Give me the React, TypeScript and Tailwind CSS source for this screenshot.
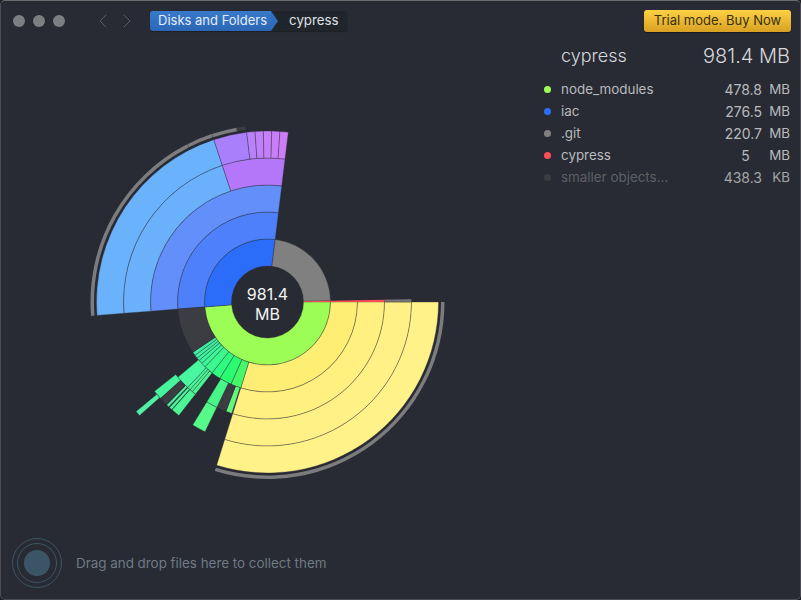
import { ChevronLeft, ChevronRight } from "lucide-react"

const CX = 267.5
const CY = 302
const R = [36, 63, 90, 117, 144, 171]

const pt = (r: number, deg: number) => {
  const a = (deg * Math.PI) / 180
  return `${(CX + r * Math.cos(a)).toFixed(2)} ${(CY + r * Math.sin(a)).toFixed(2)}`
}

const arc = (r0: number, r1: number, a0: number, a1: number) => {
  const large = a1 - a0 > 180 ? 1 : 0
  return `M${pt(r0, a0)} A${r0} ${r0} 0 ${large} 1 ${pt(r0, a1)} L${pt(r1, a1)} A${r1} ${r1} 0 ${large} 0 ${pt(r1, a0)} Z`
}

// ring index, start angle, end angle, colour (degrees clockwise from east)
const slices: [number, number, number, string][] = [
  [0, 0, 175.5, "#9bfd55"],
  [0, 175.5, 277, "#2b6cf9"],
  [0, 277, 358.8, "#808080"],

  [1, 0, 107.3, "#ffee74"],
  [2, 0, 107.3, "#fff080"],
  [3, 0, 107.3, "#fff185"],
  [4, 0, 107.3, "#fff288"],
  [3, 358.8, 360, "#777779"],

  [1, 175.5, 277, "#4e80fb"],
  [2, 175.5, 277, "#628ffa"],
  [3, 175.5, 251.7, "#6ab0fb"],
  [4, 175.5, 251.7, "#6bb2fc"],
  [3, 251.7, 277, "#b477fa"],
  [4, 251.7, 263, "#a97ffb"],
  [4, 263, 265.8, "#b982fa"],
  [4, 265.8, 268.6, "#bf80fa"],
  [4, 268.6, 271.4, "#c47ff9"],
  [4, 271.4, 274.2, "#c97ef9"],
  [4, 274.2, 277, "#ce7df8"],

  // node_modules children
  [1, 107.3, 114, "#47f76a"],
  [1, 114, 122, "#2bfb70"],
  [1, 122, 128, "#2ffb80"],
  [1, 128, 134, "#3bf98f"],
  [1, 134, 137, "#3ff796"],
  [1, 137, 139.5, "#3ff59a"],
  [1, 139.5, 141.5, "#3ff39e"],
  [1, 141.5, 143.7, "#40f1a0"],
  [1, 143.7, 146, "#40efa2"],
  [1, 146, 175.5, "#3c3d42"],

  [2, 107.8, 110.8, "#62f97c"],
  [2, 110.8, 115.7, "#3c3d42"],
  [2, 115.7, 121.3, "#47f686"],
  [2, 128, 130, "#4cf692"],
  [2, 130, 131.5, "#4cf696"],
  [2, 131.5, 133, "#4af69a"],
  [2, 133, 140, "#48f7a0"],
  [3, 115.7, 121.3, "#55fa88"],
  [3, 128, 131.5, "#4cf696"],
  [3, 131.7, 132.9, "#4cf49c"],
  [3, 133.3, 134.4, "#4cf49e"],
  [3, 134.6, 137.8, "#3c3d42"],
  [3, 138, 141.7, "#45f49c"],
  [4, 138.4, 140.2, "#4ff0a5"],
]

const outer: [number, number, string][] = [
  [0, 107.3, "#7c7c7e"],
  [175.5, 243, "#7c7c7e"],
  [243.1, 251.6, "#7c7c7e"],
  [251.7, 259.9, "#7c7c7e"],
  [259.9, 262.8, "#3c3d42"],
]

const legend = [
  { name: "node_modules", num: "478.8", unit: "MB", dot: "bg-[#9bfd55]" },
  { name: "iac", num: "276.5", unit: "MB", dot: "bg-[#2b6cf9]" },
  { name: ".git", num: "220.7", unit: "MB", dot: "bg-[#808080]" },
  { name: "cypress", num: "5", unit: "MB", dot: "bg-[#ff4d55]" },
  { name: "smaller objects...", num: "438.3", unit: "KB", dot: "bg-[#3c3d42]", dim: true },
]

const Sunburst = () => (
  <div className="relative w-[540px] h-[490px]">
    <svg width="540" height="490" viewBox="1 40 540 490">
      {slices.map(([ring, a0, a1, color], i) => (
        <path
          key={i}
          d={arc(R[ring], R[ring + 1], a0, a1)}
          fill={color}
          stroke="#2a2c34"
          strokeOpacity="0.7"
          strokeWidth="0.5"
        />
      ))}
      <path d={arc(36, 117, 358.9, 360)} fill="#ff4d55" />
      {outer.map(([a0, a1, color], i) => (
        <path key={i} d={arc(173.5, 177, a0, a1)} fill={color} />
      ))}
    </svg>
    <div className="absolute left-[226px] top-[244px] w-[81px] text-center text-[16px] leading-[20px] text-[#f2f3f4]">
      981.4
      <br />
      MB
    </div>
  </div>
)

export default function App() {
  return (
    <div className="w-[801px] h-[600px] bg-[#1d1e22] font-['Inter',sans-serif]">
      <div className="w-full h-full flex flex-col bg-[#282b33] border border-[#4b4d52] border-t-[#6a6b6e] rounded-[5px] overflow-hidden">
        {/* Title bar */}
        <div className="h-[39px] shrink-0 flex items-center pl-[12px] pr-[9px]">
          <div className="flex gap-[8px]">
            <span className="w-[12px] h-[12px] rounded-full bg-[#7d7e82]" />
            <span className="w-[12px] h-[12px] rounded-full bg-[#7d7e82]" />
            <span className="w-[12px] h-[12px] rounded-full bg-[#7d7e82]" />
          </div>
          <div className="flex ml-[26px] gap-0 text-[#555a62]">
            <ChevronLeft size={24} strokeWidth={1} />
            <ChevronRight size={24} strokeWidth={1} />
          </div>
          <div className="flex items-center h-[20px] ml-[11px] text-[13px] rounded-[3px] bg-[#20242b] shadow-[0_1px_1px_rgba(0,0,0,0.3)]">
            <div className="relative h-full flex items-center pl-[8px] pr-[4px] rounded-l-[3px] bg-gradient-to-b from-[#3a7acb] to-[#2a66b4] text-[#e4edf8]">
              Disks and Folders
              <span className="absolute left-full top-0 border-y-[10px] border-y-transparent border-l-[7px] border-l-[#2f6ebf]" />
            </div>
            <div className="pl-[18px] pr-[8px] text-[13.3px] text-[#dfe1e4]">cypress</div>
          </div>
          <button className="ml-auto w-[147px] h-[22px] rounded-[3px] bg-gradient-to-b from-[#fdd243] to-[#d8a022] text-[13px] text-[#37300f] shadow-[0_1px_1px_rgba(0,0,0,0.4)]">
            Trial mode. Buy Now
          </button>
        </div>

        {/* Chart and legend */}
        <div className="flex-1 flex">
          <Sunburst />
          <div className="ml-[3px] w-[246px]">
            <div className="flex justify-between items-center mt-[4px] pl-[17px] text-[#d6d8db] font-light">
              <span className="text-[18px] leading-[24px]">cypress</span>
              <span className="text-[20px] leading-[24px]">981.4 MB</span>
            </div>
            <div className="mt-[10px]">
              {legend.map((row) => (
                <div
                  key={row.name}
                  className={`flex items-center h-[22px] text-[13.4px] ${row.dim ? "text-[#5d6066]" : "text-[#b8babe]"}`}
                >
                  <span className={`w-[7px] h-[7px] rounded-full ${row.dot}`} />
                  <span className="ml-[10px]">{row.name}</span>
                  <span className={`ml-auto text-[14px] ${row.dim ? "text-[#a3a5a9]" : ""}`}>
                    {row.num}
                    {row.num === "5" && <span className="invisible">.0</span>}
                  </span>
                  <span className={`w-[28px] text-right ${row.dim ? "text-[#a3a5a9]" : ""}`}>{row.unit}</span>
                </div>
              ))}
            </div>
          </div>
        </div>

        {/* Drop zone */}
        <div className="h-[69px] shrink-0 flex items-center pl-[11px] pb-[3px]">
          <div className="w-[50px] h-[50px] rounded-full border border-[#3c5566] flex items-center justify-center">
            <div className="w-[40px] h-[40px] rounded-full border border-[#3c5566] flex items-center justify-center">
              <div className="w-[26px] h-[26px] rounded-full bg-[#3c5566]" />
            </div>
          </div>
          <span className="ml-[14px] text-[13.4px] text-[#6f7a85]">Drag and drop files here to collect them</span>
        </div>
      </div>
    </div>
  )
}
